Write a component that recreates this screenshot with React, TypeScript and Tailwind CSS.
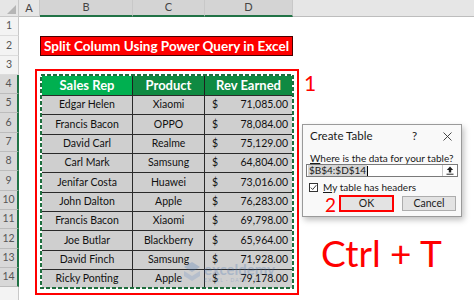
import React from "react";

const data = [
  ["Edgar Helen", "Xiaomi", "71,085.00"],
  ["Francis Bacon", "OPPO", "78,084.00"],
  ["David Carl", "Realme", "75,129.00"],
  ["Carl Mark", "Samsung", "64,804.00"],
  ["Jenifar Costa", "Huawei", "73,016.00"],
  ["John Dalton", "Apple", "76,283.00"],
  ["Francis Bacon", "Xiaomi", "69,798.00"],
  ["Joe Butlar", "Blackberry", "65,964.00"],
  ["David Finch", "Samsung", "71,928.00"],
  ["Ricky Ponting", "Apple", "79,178.00"],
];

const rowNums = Array.from({ length: 15 }, (_, i) => i + 1);

const ColHead = ({ label, w, sel }: { label: string; w: string; sel?: boolean }) => (
  <div
    className={`${w} flex items-center justify-center border-r border-[#c8c8c8] ${
      sel ? "bg-[#d4d4d4] border-b-2 border-b-[#217346]" : "border-b border-b-[#bdbdbd]"
    }`}
  >
    {label}
  </div>
);

const Dialog = () => (
  <div className="absolute left-[302px] top-[124px] flex h-[93px] w-[160px] flex-col border border-[#9a9a9a] bg-[#f9f9f9] text-[10px] text-[#1a1a1a] shadow-[2px_3px_6px_rgba(0,0,0,0.25)]">
    <div className="flex h-[22px] shrink-0 items-center pl-[7px] text-[11.5px]">
      <span className="w-[102px]">Create Table</span>
      <span className="w-[30px]">?</span>
      <svg width="9" height="9" viewBox="0 0 9 9" className="ml-[1px]">
        <path d="M0.5 0.5 L8.5 8.5 M8.5 0.5 L0.5 8.5" stroke="#333" strokeWidth="0.9" />
      </svg>
    </div>
    <div className="mt-[5px] flex h-[12px] shrink-0 items-center pl-[7px]">
      <span>
        <span className="underline">W</span>here is the data for your table?
      </span>
    </div>
    <div className="mx-[3px] flex h-[13px] shrink-0 items-center border border-[#7a7a7a] bg-white">
      <span className="ml-[1px] bg-[#d6d6d6] px-[1px] text-[10px] leading-[11px]">$B$4:$D$14</span>
      <span className="h-[10px] w-px bg-black" />
      <div className="ml-auto flex h-full w-[15px] items-center justify-center border-l border-[#c8c8c8]">
        <svg width="8" height="9" viewBox="0 0 8 9">
          <path d="M4 0.5 L0.8 4 H2.8 V6.5 H5.2 V4 H7.2 Z" fill="#222" />
          <path d="M0.5 8.2 H7.5" stroke="#222" strokeWidth="1" />
        </svg>
      </div>
    </div>
    <div className="mt-[4px] flex h-[12px] shrink-0 items-center pl-[6px]">
      <div className="flex h-[9px] w-[9px] items-center justify-center border border-[#333] bg-white">
        <svg width="7" height="7" viewBox="0 0 7 7">
          <path d="M0.8 3.6 L2.7 5.5 L6.3 1.2" fill="none" stroke="#222" strokeWidth="0.9" />
        </svg>
      </div>
      <span className="ml-[5px]">
        <span className="underline">M</span>y table has headers
      </span>
    </div>
    <div className="mt-[2px] flex shrink-0 items-center pl-[36px] text-[10.5px]">
      <div className="flex h-[17px] w-[55px] items-center justify-center border-2 border-[#ff0000] bg-[#e3e3e3]">
        OK
      </div>
      <div className="ml-[8px] flex h-[15px] w-[54px] items-center justify-center border border-[#adadad] bg-[#e3e3e3]">
        Cancel
      </div>
    </div>
  </div>
);

export default function App() {
  return (
    <div className="relative h-[300px] w-[474px] overflow-hidden bg-white font-['Lato',sans-serif]">
      <div className="flex h-[17px] bg-[#e6e6e6] text-[11px] text-[#444]">
        <div className="relative w-[19px] border-r border-b border-[#c8c8c8]">
          <div className="absolute bottom-[2px] right-[2px] h-0 w-0 border-b-[9px] border-l-[9px] border-b-[#b5b5b5] border-l-transparent" />
        </div>
        <ColHead label="A" w="w-[21px]" />
        <ColHead label="B" w="w-[93px]" sel />
        <ColHead label="C" w="w-[72px]" sel />
        <ColHead label="D" w="w-[88px]" sel />
        <div className="flex-1 border-b border-[#bdbdbd]" />
      </div>

      <div className="flex">
        <div className="flex w-[19px] flex-col text-[10.5px] text-[#555]">
          {rowNums.map((n) => {
            const sel = n >= 4 && n <= 14;
            return (
              <div
                key={n}
                className={`flex h-[19.3px] shrink-0 items-center justify-center border-b ${
                  sel
                    ? "border-b-[#bcbcbc] border-r-2 border-r-[#217346] bg-[#d8d8d8]"
                    : "border-b-[#dcdcdc] border-r border-r-[#c8c8c8] bg-[#f3f3f3]"
                }`}
              >
                {n < 15 ? n : ""}
              </div>
            );
          })}
        </div>

        <div className="flex flex-col pl-[21px]">
          <div className="h-[19.3px]" />
          <div className="flex h-[19.3px] items-center">
            <div className="mt-[1px] flex h-[20px] w-[253px] items-center justify-center border border-[#4a0000] bg-[#ff0000] text-[13.5px] font-bold text-white">
              Split Column Using Power Query in Excel
            </div>
          </div>
          <div className="h-[18.3px]" />

          <div className="relative w-[254px] border-2 border-white outline-2 outline-offset-[3px] outline-[#ff0000]">
            <div className="flex h-[19.3px] text-[13px] font-bold text-white">
              <div className="flex w-[91px] items-center justify-center border-r border-[#1f1f1f] bg-[#00b050]">Sales Rep</div>
              <div className="flex w-[72px] items-center justify-center border-r border-[#1f1f1f] bg-[#0f8a42]">Product</div>
              <div className="flex w-[87px] items-center justify-center bg-[#0f8a42]">Rev Earned</div>
            </div>
            {data.map(([name, prod, rev], i) => (
              <div key={i} className="flex h-[19.3px] border-t border-[#2a2a2a] bg-[#cfcfcf] text-[10.5px] text-[#111]">
                <div className="flex w-[91px] items-center justify-center border-r border-[#2a2a2a]">{name}</div>
                <div className="flex w-[72px] items-center justify-center border-r border-[#2a2a2a]">{prod}</div>
                <div className="flex w-[87px] items-center justify-between pl-[7px] pr-[4px]">
                  <span>$</span>
                  <span>{rev}</span>
                </div>
              </div>
            ))}
            <svg className="pointer-events-none absolute inset-[-2px] h-[calc(100%+4px)] w-[calc(100%+4px)]">
              <rect x="1" y="1" width="252" height="213" fill="none" stroke="#1e6e3e" strokeWidth="2" strokeDasharray="4 2" />
            </svg>
          </div>
        </div>
      </div>

      <div className="pointer-events-none absolute left-[183px] top-[261px] flex items-center gap-[3px] opacity-25">
        <svg width="18" height="22" viewBox="0 0 18 22">
          <path d="M9 1 L17 6 L9 11 L1 6 Z" fill="#3b6db3" />
          <path d="M1 10 L9 15 L17 10 L17 15 L9 20 L1 15 Z" fill="#6b8fc7" />
        </svg>
        <div className="flex flex-col leading-none">
          <span className="text-[15px] font-bold text-[#3b6db3]">exceldemy</span>
          <span className="mt-[1px] text-[5px] tracking-[1px] text-[#3b6db3]">EXCEL · DATA · BI</span>
        </div>
      </div>

      <div className="absolute left-[304px] top-[72px] text-[21px] leading-none text-[#ff0000]">1</div>

      <Dialog />

      <div className="absolute left-[325px] top-[195px] text-[19px] leading-none text-[#ff0000]">2</div>

      <div className="absolute left-[321px] top-[234px] text-[37px] leading-none text-[#ff0000]">Ctrl + T</div>
    </div>
  );
}
